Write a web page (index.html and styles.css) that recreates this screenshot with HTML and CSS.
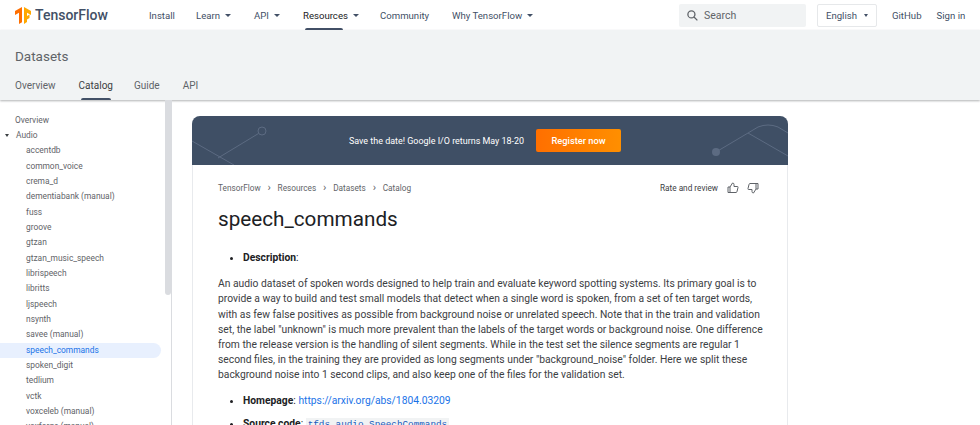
FILE: index.html
```html
<!DOCTYPE html>
<html lang="en">
<head>
<meta charset="utf-8">
<title>speech_commands | TensorFlow Datasets</title>
<link rel="stylesheet" href="styles.css">
</head>
<body>
<header class="top">
  <a class="logo">
    <svg class="logo-mark" viewBox="0 0 16 17" width="16" height="17"><path fill="#ff6f00" d="M7 0 0 4v4l4-2.300V17l3-1.800z"/><path fill="#ffa800" d="M9 0l7 4v4l-4-2.300V9l2.500-1.400v3.400L12 12.400V15l-3 2z"/></svg>
    <span class="logo-text">TensorFlow</span>
  </a>
  <nav class="nav">
    <a class="nav-item n1">Install</a>
    <a class="nav-item n2">Learn<i class="caret"></i></a>
    <a class="nav-item n3">API<i class="caret"></i></a>
    <a class="nav-item n4 active">Resources<i class="caret"></i></a>
    <a class="nav-item n5">Community</a>
    <a class="nav-item n6">Why TensorFlow<i class="caret"></i></a>
  </nav>
  <div class="search">
    <svg viewBox="0 0 24 24" width="13" height="13"><path fill="none" stroke="#5f6368" stroke-width="2.400" d="M10 3.500a6.500 6.500 0 1 0 0 13 6.500 6.500 0 0 0 0-13zM14.800 14.800 21 21"/></svg>
    <span>Search</span>
  </div>
  <div class="lang">English<i class="caret small"></i></div>
  <a class="link github">GitHub</a>
  <a class="link">Sign in</a>
</header>
<section class="sub">
  <div class="sub-title">Datasets</div>
  <div class="tabs">
    <a class="tab t1">Overview</a>
    <a class="tab t2 active">Catalog</a>
    <a class="tab t3">Guide</a>
    <a class="tab">API</a>
  </div>
</section>
<div class="body-row">
  <aside class="side">
    <ul class="tree">
      <li class="top-item">Overview</li>
      <li class="top-item"><i class="caret tiny"></i>Audio</li>
      <li>accentdb</li>
      <li>common_voice</li>
      <li>crema_d</li>
      <li>dementiabank (manual)</li>
      <li>fuss</li>
      <li>groove</li>
      <li>gtzan</li>
      <li>gtzan_music_speech</li>
      <li>librispeech</li>
      <li>libritts</li>
      <li>ljspeech</li>
      <li>nsynth</li>
      <li>savee (manual)</li>
      <li class="current">speech_commands</li>
      <li>spoken_digit</li>
      <li>tedlium</li>
      <li>vctk</li>
      <li>voxceleb (manual)</li>
      <li>voxforge (manual)</li>
    </ul>
    <div class="thumb"></div>
  </aside>
  <main class="card">
    <div class="banner">
      <svg class="deco" viewBox="0 0 596 49" width="596" height="49">
        <g fill="none" stroke="#5c6b82" stroke-width="1">
          <circle cx="70" cy="15" r="4"/>
          <path d="M66.500 17.500 26 42M0 25l42 24"/>
          <path d="M524 36 556 17l10-6q10-4 20 0l10 6M556 17l40 23"/>
        </g>
        <circle cx="524" cy="36" r="4" fill="#5c6b82"/>
      </svg>
      <span class="banner-text">Save the date! Google I/O returns May 18-20</span>
      <a class="btn">Register now</a>
    </div>
    <div class="content">
      <div class="crumbs">
        <a>TensorFlow</a><b>›</b><a>Resources</a><b>›</b><a>Datasets</a><b>›</b><a>Catalog</a>
        <span class="rate">Rate and review</span>
        <svg class="thumbs" viewBox="0 0 24 24" width="12" height="12"><path fill="none" stroke="#5f6368" stroke-width="2" d="M2 10h4v11H2zM6 10l5-8q3 0 3 3v4h7q1.500 0 1 2l-2 8q-.5 2-2 2H6"/></svg>
        <svg class="thumbs down" viewBox="0 0 24 24" width="12" height="12"><path fill="none" stroke="#5f6368" stroke-width="2" d="M2 10h4v11H2zM6 10l5-8q3 0 3 3v4h7q1.500 0 1 2l-2 8q-.5 2-2 2H6"/></svg>
      </div>
      <h1>speech_commands</h1>
      <ul class="bullets">
        <li><strong>Description</strong>:</li>
      </ul>
      <p>An audio dataset of spoken words designed to help train and evaluate keyword spotting systems. Its primary goal is to provide a way to build and test small models that detect when a single word is spoken, from a set of ten target words, with as few false positives as possible from background noise or unrelated speech. Note that in the train and validation set, the label "unknown" is much more prevalent than the labels of the target words or background noise. One difference from the release version is the handling of silent segments. While in the test set the silence segments are regular 1 second files, in the training they are provided as long segments under "background_noise" folder. Here we split these background noise into 1 second clips, and also keep one of the files for the validation set.</p>
      <ul class="bullets">
        <li><strong>Homepage</strong>: <a class="url">https://arxiv.org/abs/1804.03209</a></li>
        <li><strong>Source code</strong>: <code>tfds.audio.SpeechCommands</code></li>
      </ul>
    </div>
  </main>
</div>
</body>
</html>
```

FILE: styles.css
```css
* { box-sizing: border-box; }
html, body { margin: 0; height: 425px; overflow: hidden; background: #fff; }
body { font-family: Roboto, "Liberation Sans", sans-serif; color: #3c4043; }
a { color: inherit; text-decoration: none; }
ul { list-style: none; margin: 0; padding: 0; }

.top { height: 30px; display: flex; align-items: center; padding: 0 0 0 15px; background: #fff; font-size: 9.600px; color: #425066; }
.logo { display: flex; align-items: center; width: 134px; }
.logo-mark { margin-right: 4px; }
.logo-text { font-size: 14px; font-weight: 500; color: #425066; }
.nav { display: flex; height: 30px; width: 530px; align-items: stretch; }
.nav-item { display: flex; align-items: center; height: 30px; position: relative; }
.n1 { width: 47px; }
.n2 { width: 58px; }
.n3 { width: 49px; }
.n4 { width: 77px; color: #202124; }
.n4::after { content: ""; position: absolute; left: 2px; width: 38px; bottom: 0; height: 2px; background: #425066; border-radius: 2px 2px 0 0; }
.n5 { width: 72px; }
.caret { display: inline-block; width: 0; height: 0; border-style: solid; border-color: #425066 transparent transparent; border-width: 3.500px 3.500px 0; margin-left: 5px; }
.caret.small { border-width: 3px 2.500px 0; margin-left: 7px; }
.caret.tiny { border-width: 3px 2.500px 0; border-top-color: #3c4043; margin: 0 7px 1px -10px; vertical-align: middle; }
.search { display: flex; align-items: center; width: 127px; height: 23px; background: #f1f3f4; border-radius: 2px; padding-left: 7px; color: #5f6368; font-size: 10.500px; margin-right: 11px; }
.search span { margin-left: 5px; }
.lang { display: flex; align-items: center; justify-content: center; width: 60px; height: 23px; border: 1px solid #e6e8ea; border-radius: 2px; margin-right: 15px; }
.link { color: #425066; }
.github { margin-right: 15px; }

.sub { height: 70px; background: #f1f3f4; box-shadow: 0 1px 2px rgba(60,64,67,.4); position: relative; padding: 18px 0 0 15px; }
.sub-title { font-size: 13.500px; line-height: 16px; color: #5f6368; }
.tabs { display: flex; margin-top: 14px; font-size: 10px; color: #5f6368; }
.tab { height: 22px; line-height: 15px; display: block; position: relative; }
.t1 { margin-right: 23px; }
.t2 { margin-right: 21px; color: #3c4043; }
.t2::after { content: ""; position: absolute; left: 2px; right: 2px; bottom: 0; height: 2px; background: #425066; border-radius: 2px 2px 0 0; }
.t3 { margin-right: 23px; }

.body-row { display: flex; height: 325px; overflow: hidden; }
.side { width: 172px; flex: none; position: relative; border-right: 1px solid #dadce0; padding-top: 12.800px; overflow: hidden; }
.thumb { position: absolute; right: 0; top: 0; width: 6px; height: 195px; background: #dadce0; border-radius: 0 0 3px 3px; }
.tree { font-size: 8.400px; line-height: 15.330px; color: #5f6368; }
.tree li { padding-left: 26px; height: 15.330px; width: 161px; white-space: nowrap; }
.tree .top-item { padding-left: 15px; }
.tree .current { background: #e8f0fe; color: #1a73e8; border-radius: 0 8px 8px 0; }

.card { width: 596px; margin: 16px 0 0 20px; flex: none; border-right: 1px solid #e8eaed; border-left: 1px solid #e8eaed; border-radius: 8px 8px 0 0; }
.banner { height: 49px; margin: 0 -1px; background: #3f4f65; border-radius: 8px 8px 0 0; display: flex; align-items: center; position: relative; color: #fff; font-size: 8.950px; gap: 12px; padding-left: 157px; }
.deco { position: absolute; left: 0; top: 0; }
.banner-text { position: relative; white-space: nowrap; }
.btn { position: relative; width: 85px; height: 23px; line-height: 23px; text-align: center; font-weight: 500; border-radius: 2px; background: linear-gradient(90deg, #ff6f00, #ff8f00); font-size: 9.300px; }

.content { padding: 17px 25px 0 25px; }
.crumbs { display: flex; align-items: center; height: 12px; font-size: 8.250px; color: #5f6368; }
.crumbs b { font-weight: 400; font-size: 11px; line-height: 10px; margin: 0 6.800px; }
.rate { margin-left: auto; margin-right: 9px; color: #3c4043; }
.thumbs { margin-right: 8px; }
.thumbs.down { transform: rotate(180deg); margin-right: 3px; }
h1 { font-weight: 400; font-size: 20.700px; line-height: 24px; margin: 13px 0 0; color: #202124; }
.bullets { list-style: disc; padding-left: 25px; font-size: 10.300px; line-height: 15.250px; color: #202124; }
.bullets li { margin-bottom: 8.500px; }
.bullets strong { font-weight: 700; }
.content > .bullets:first-of-type { margin-top: 19px; }
p { margin: 11px -3px 10px 0; font-size: 10.300px; line-height: 15.200px; color: #3c4043; }
.url { color: #1a73e8; }
code { font-family: "Liberation Mono", "DejaVu Sans Mono", monospace; font-size: 9.300px; background: #f1f3f4; color: #185abc; padding: 1px 2px; }
```
